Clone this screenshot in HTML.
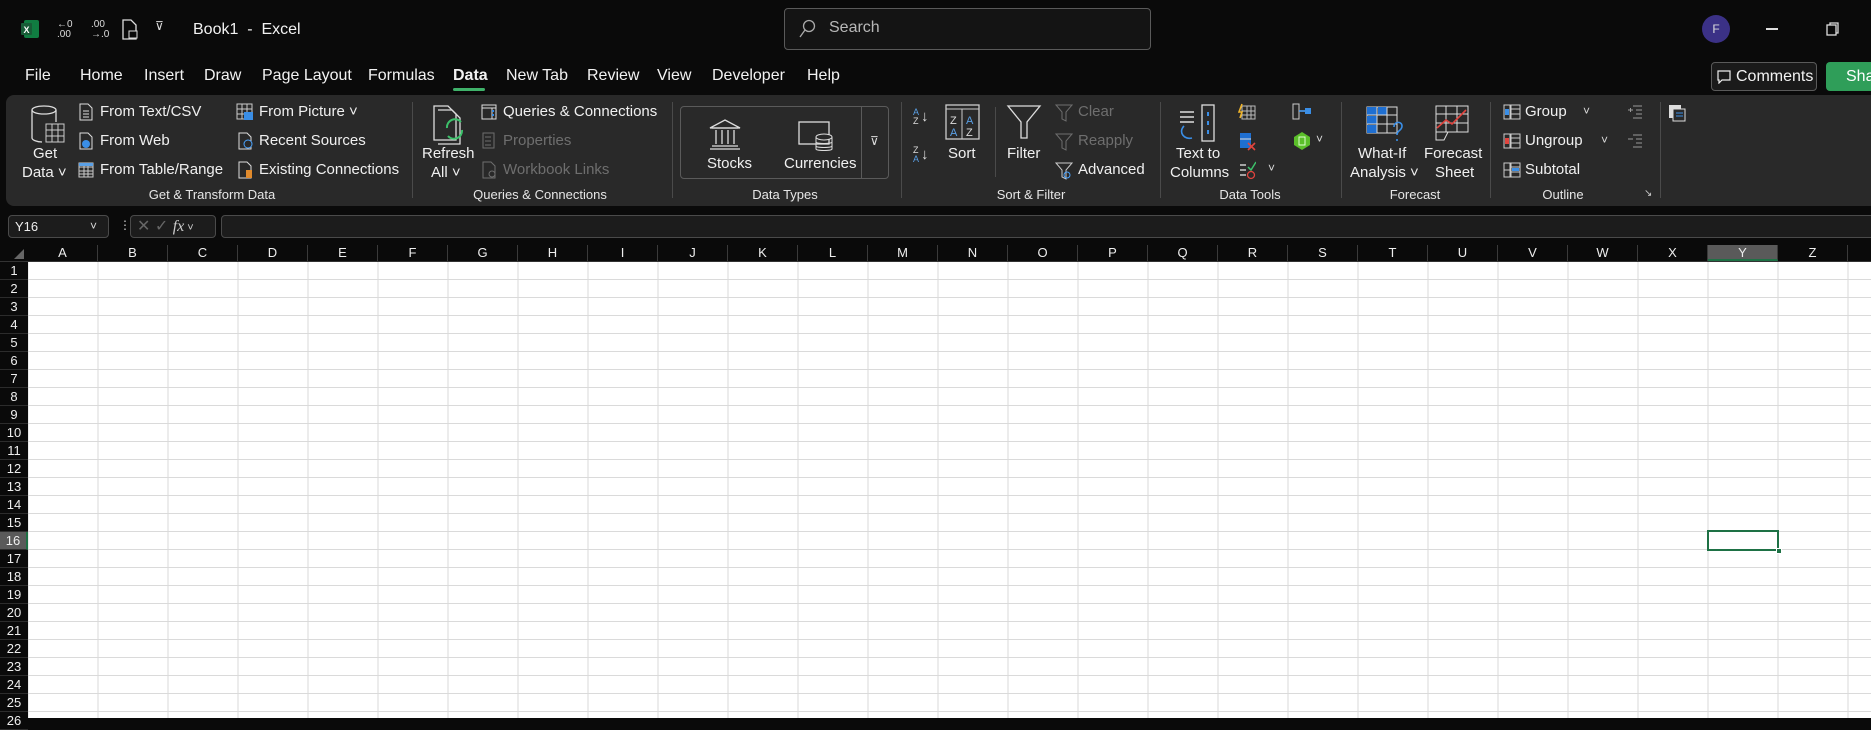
<!DOCTYPE html>
<html><head><meta charset="utf-8"><style>
*{margin:0;padding:0;box-sizing:border-box}
body{width:1871px;height:718px;background:#0a0a0a;font-family:"Liberation Sans",sans-serif;color:#fff;position:relative;overflow:hidden}
.a{position:absolute;white-space:nowrap}
.t{font-size:15px;color:#f0f0f0}
.dis{color:#6e6e6e}
.gl{font-size:13px;color:#e6e6e6;transform:translateX(-50%)}
.sep{position:absolute;top:102px;width:1px;height:96px;background:#4a4a4a}
.tab{font-size:16px;color:#f2f2f2;top:67px}
.ch{position:absolute;top:245px;height:16px;width:70px;text-align:center;font-size:13px;color:#eee;border-right:1px solid #3a3a3a;line-height:16px}
.rh{position:absolute;left:0;width:28px;height:18px;font-size:13px;color:#eee;text-align:center;line-height:18px;border-bottom:1px solid #2c2c2c}
svg{position:absolute}
</style></head><body>
<!-- title bar -->
<svg style="left:20px;top:19px" width="20" height="20" viewBox="0 0 20 20"><rect x="4" y="1" width="15" height="18" rx="2" fill="#107c41"/><rect x="1" y="4" width="11" height="12" rx="1" fill="#185c37"/><text x="3.5" y="14" font-size="9" fill="#fff" font-family="Liberation Sans" font-weight="bold">X</text></svg>
<div class="a" style="left:57px;top:20px;font-size:10px;line-height:10px;color:#ddd">←0<br>.00</div>
<div class="a" style="left:91px;top:20px;font-size:10px;line-height:10px;color:#ddd">.00<br>→.0</div>
<svg style="left:121px;top:19px" width="18" height="22"><path d="M2 1h8l5 5v14H2z" fill="none" stroke="#ddd" stroke-width="1.3"/><rect x="8" y="12" width="8" height="7" fill="#0a0a0a" stroke="#ddd"/></svg>
<div class="a" style="left:155px;top:19px;font-size:12px;color:#ddd">⊽</div>
<div class="a" style="left:193px;top:21px;font-size:16px;color:#f2f2f2">Book1&nbsp; - &nbsp;Excel</div>
<div class="a" style="left:784px;top:8px;width:367px;height:42px;border:1px solid #5a5a5a;border-radius:4px;background:#141414"></div>
<svg style="left:798px;top:19px" width="18" height="20"><circle cx="11" cy="7" r="5.5" fill="none" stroke="#aaa" stroke-width="1.3"/><path d="M7 11L2 18" stroke="#aaa" stroke-width="1.3"/></svg>
<div class="a" style="left:829px;top:19px;font-size:16px;color:#b8b8b8">Search</div>
<div class="a" style="left:1702px;top:15px;width:28px;height:28px;border-radius:50%;background:#3b3186;font-size:12px;text-align:center;line-height:28px;color:#ddd">F</div>
<div class="a" style="left:1766px;top:28px;width:12px;height:1.5px;background:#ddd"></div>
<svg style="left:1826px;top:22px" width="14" height="14"><rect x="1" y="3" width="9" height="10" fill="none" stroke="#ddd" stroke-width="1.3"/><path d="M4 3V1h8v10h-2" fill="none" stroke="#ddd" stroke-width="1.3"/></svg>
<!-- tabs -->
<div class="a tab" style="left:25px">File</div>
<div class="a tab" style="left:80px">Home</div>
<div class="a tab" style="left:144px">Insert</div>
<div class="a tab" style="left:204px">Draw</div>
<div class="a tab" style="left:262px">Page Layout</div>
<div class="a tab" style="left:368px">Formulas</div>
<div class="a tab" style="left:453px;font-weight:bold">Data</div>
<div class="a" style="left:453px;top:88px;width:32px;height:3px;background:#3fb26a;border-radius:2px"></div>
<div class="a tab" style="left:506px">New Tab</div>
<div class="a tab" style="left:587px">Review</div>
<div class="a tab" style="left:657px">View</div>
<div class="a tab" style="left:712px">Developer</div>
<div class="a tab" style="left:807px">Help</div>
<div class="a" style="left:1711px;top:62px;width:106px;height:29px;border:1px solid #5a5a5a;border-radius:4px;background:#1a1a1a;font-size:16px;line-height:27px;padding-left:24px;color:#f2f2f2">Comments</div>
<svg style="left:1717px;top:70px" width="14" height="14"><path d="M1 1h12v9H5l-3 3v-3H1z" fill="none" stroke="#eee" stroke-width="1.2"/></svg>
<div class="a" style="left:1826px;top:62px;width:60px;height:29px;border-radius:4px;background:#2f9e59;font-size:16px;line-height:29px;padding-left:20px;color:#fff">Share</div>
<!-- ribbon -->
<div class="a" style="left:6px;top:95px;width:1880px;height:111px;background:#292929;border-radius:8px"></div>
<!-- get data -->
<svg style="left:29px;top:104px" width="40" height="46"><ellipse cx="15" cy="6" rx="12" ry="4" fill="none" stroke="#ddd" stroke-width="1.3"/><path d="M3 6v28c0 2 5 4 10 4M27 6v12" fill="none" stroke="#ddd" stroke-width="1.3"/><rect x="17" y="20" width="18" height="18" fill="#292929" stroke="#ccc"/><path d="M17 26h18M17 32h18M23 20v18M29 20v18" stroke="#ccc"/></svg>
<div class="a t" style="left:33px;top:145px">Get</div>
<div class="a t" style="left:22px;top:164px">Data ˅</div>
<div class="a t" style="left:100px;top:103px">From Text/CSV</div>
<div class="a t" style="left:100px;top:132px">From Web</div>
<div class="a t" style="left:100px;top:161px">From Table/Range</div>
<svg style="left:79px;top:103px" width="14" height="18"><path d="M1 1h8l4 4v12H1z" fill="none" stroke="#ddd"/><path d="M4 8h6M4 11h6M4 14h6" stroke="#ddd"/></svg>
<svg style="left:79px;top:132px" width="14" height="18"><path d="M1 1h8l4 4v12H1z" fill="none" stroke="#ddd"/><circle cx="7" cy="12" r="4" fill="#3a8ee6"/></svg>
<svg style="left:78px;top:162px" width="16" height="16"><rect x="1" y="1" width="14" height="14" fill="none" stroke="#ccc"/><path d="M1 5h14M1 9h14M1 12h14M6 1v14M10 1v14" stroke="#ccc"/><rect x="1" y="1" width="14" height="3" fill="#5aa0e6"/></svg>
<div class="a t" style="left:259px;top:103px">From Picture ˅</div>
<div class="a t" style="left:259px;top:132px">Recent Sources</div>
<div class="a t" style="left:259px;top:161px">Existing Connections</div>
<svg style="left:236px;top:103px" width="18" height="18"><rect x="1" y="1" width="15" height="15" fill="none" stroke="#ccc"/><path d="M1 6h15M1 11h15M6 1v15M11 1v15" stroke="#ccc"/><rect x="8" y="9" width="9" height="8" fill="#3a8ee6"/></svg>
<svg style="left:238px;top:132px" width="16" height="18"><path d="M1 1h8l4 4v12H1z" fill="none" stroke="#ddd"/><circle cx="10" cy="12" r="4" fill="#292929" stroke="#4aa3ff"/></svg>
<svg style="left:238px;top:161px" width="16" height="18"><path d="M1 1h8l4 4v12H1z" fill="none" stroke="#ddd"/><rect x="8" y="9" width="6" height="8" fill="#e08a2c"/></svg>
<div class="a gl" style="left:212px;top:187px">Get &amp; Transform Data</div>
<div class="sep" style="left:412px"></div>
<!-- queries -->
<svg style="left:432px;top:104px" width="36" height="44"><path d="M2 2h14l8 8v26H2z" fill="none" stroke="#ddd" stroke-width="1.3"/><path d="M6 6h14l8 8v26H6" fill="none" stroke="#ddd" stroke-width="1.3"/><path d="M30 26a8 8 0 0 1-14 6M15 24a8 8 0 0 1 14-6" fill="none" stroke="#3cc06a" stroke-width="2"/></svg>
<div class="a t" style="left:422px;top:145px">Refresh</div>
<div class="a t" style="left:431px;top:164px">All ˅</div>
<svg style="left:481px;top:104px" width="16" height="16"><rect x="1" y="1" width="14" height="14" fill="none" stroke="#ddd"/><path d="M1 4h14M11 4v11" stroke="#ddd"/><path d="M12 6v2M12 10v2" stroke="#3a8ee6" stroke-width="2"/></svg>
<div class="a t" style="left:503px;top:103px">Queries &amp; Connections</div>
<svg style="left:482px;top:132px" width="14" height="18"><rect x="1" y="1" width="11" height="15" fill="none" stroke="#6e6e6e"/><path d="M3 5h6M3 9h6M3 13h6" stroke="#6e6e6e"/></svg>
<div class="a t dis" style="left:503px;top:132px">Properties</div>
<svg style="left:482px;top:161px" width="16" height="18"><path d="M1 1h8l4 4v12H1z" fill="none" stroke="#6e6e6e"/><circle cx="10" cy="13" r="3" fill="none" stroke="#6e6e6e"/></svg>
<div class="a t dis" style="left:503px;top:161px">Workbook Links</div>
<div class="a gl" style="left:540px;top:187px">Queries &amp; Connections</div>
<div class="sep" style="left:672px"></div>
<!-- data types -->
<div class="a" style="left:680px;top:106px;width:209px;height:73px;border:1px solid #5a5a5a;border-radius:4px"></div>
<div class="a" style="left:861px;top:106px;width:1px;height:73px;background:#5a5a5a"></div>
<div class="a" style="left:870px;top:134px;font-size:12px;color:#ddd">⊽</div>
<svg style="left:708px;top:118px" width="34" height="32"><path d="M2 10L17 2l15 8z" fill="none" stroke="#ddd" stroke-width="1.3"/><path d="M4 10h26M4 28h26M2 31h30M8 12v14M14 12v14M20 12v14M26 12v14" stroke="#ddd" stroke-width="1.3"/></svg>
<div class="a t" style="left:707px;top:155px">Stocks</div>
<svg style="left:798px;top:120px" width="40" height="34"><rect x="1" y="2" width="30" height="22" fill="none" stroke="#ddd" stroke-width="1.3"/><ellipse cx="26" cy="17" rx="8" ry="3" fill="#292929" stroke="#ddd"/><path d="M18 17v12c0 2 16 2 16 0V17M18 22c0 2 16 2 16 0M18 26c0 2 16 2 16 0" fill="none" stroke="#ddd"/></svg>
<div class="a t" style="left:784px;top:155px">Currencies</div>
<div class="a gl" style="left:785px;top:187px">Data Types</div>
<div class="sep" style="left:901px"></div>
<!-- sort & filter -->
<div class="a" style="left:913px;top:108px;font-size:9px;line-height:9px;color:#5aa0e6">A<br><span style="color:#ddd">Z</span></div>
<div class="a" style="left:921px;top:108px;font-size:15px;color:#ddd">↓</div>
<div class="a" style="left:913px;top:146px;font-size:9px;line-height:9px;color:#ddd">Z<br><span style="color:#5aa0e6">A</span></div>
<div class="a" style="left:921px;top:146px;font-size:15px;color:#ddd">↓</div>
<svg style="left:945px;top:104px" width="36" height="38"><rect x="1" y="1" width="33" height="34" fill="none" stroke="#ccc" stroke-width="1.3"/><path d="M1 5h33M17 5v30" stroke="#ccc"/><text x="5" y="20" font-size="11" fill="#ddd" font-family="Liberation Sans">Z</text><text x="5" y="32" font-size="11" fill="#5aa0e6" font-family="Liberation Sans">A</text><text x="21" y="20" font-size="11" fill="#5aa0e6" font-family="Liberation Sans">A</text><text x="21" y="32" font-size="11" fill="#ddd" font-family="Liberation Sans">Z</text></svg>
<div class="a t" style="left:948px;top:145px">Sort</div>
<div class="a" style="left:995px;top:107px;width:1px;height:70px;background:#4a4a4a"></div>
<svg style="left:1006px;top:104px" width="36" height="36"><path d="M2 2h32L21 18v16h-6V18z" fill="none" stroke="#ddd" stroke-width="1.3"/></svg>
<div class="a t" style="left:1007px;top:145px">Filter</div>
<svg style="left:1055px;top:103px" width="18" height="20"><path d="M1 2h16l-6 7v9l-4-2V9z" fill="none" stroke="#6e6e6e"/></svg>
<div class="a t dis" style="left:1078px;top:103px">Clear</div>
<svg style="left:1055px;top:132px" width="18" height="20"><path d="M1 2h16l-6 7v9l-4-2V9z" fill="none" stroke="#6e6e6e"/></svg>
<div class="a t dis" style="left:1078px;top:132px">Reapply</div>
<svg style="left:1055px;top:161px" width="18" height="20"><path d="M1 2h16l-6 7v9l-4-2V9z" fill="none" stroke="#ccc"/><circle cx="12" cy="14" r="3" fill="none" stroke="#4aa3ff"/></svg>
<div class="a t" style="left:1078px;top:161px">Advanced</div>
<div class="a gl" style="left:1031px;top:187px">Sort &amp; Filter</div>
<div class="sep" style="left:1160px"></div>
<!-- data tools -->
<svg style="left:1178px;top:104px" width="40" height="40"><path d="M2 8h14M2 13h14M2 18h14" stroke="#ddd" stroke-width="1.5"/><rect x="24" y="1" width="12" height="36" fill="none" stroke="#ddd" stroke-width="1.3"/><path d="M30 8v4M30 17v4M30 26v4" stroke="#3a8ee6" stroke-width="2"/><path d="M6 22c-6 6 0 14 8 12" fill="none" stroke="#3a8ee6" stroke-width="1.6"/></svg>
<div class="a t" style="left:1176px;top:145px">Text to</div>
<div class="a t" style="left:1170px;top:164px">Columns</div>
<svg style="left:1238px;top:103px" width="18" height="18"><rect x="4" y="3" width="13" height="13" fill="none" stroke="#bbb"/><path d="M4 8h13M4 12h13M9 3v13M13 3v13" stroke="#bbb"/><path d="M4 1L1 9h3l-2 6" fill="none" stroke="#f0b429" stroke-width="1.6"/></svg>
<svg style="left:1238px;top:132px" width="18" height="20"><rect x="2" y="1" width="11" height="15" fill="#1f6fd1"/><path d="M2 7h11" stroke="#ddd"/><path d="M10 11l7 7M17 11l-7 7" stroke="#e0443e" stroke-width="1.6"/></svg>
<svg style="left:1238px;top:161px" width="18" height="20"><path d="M2 4h6M2 9h6M2 14h6" stroke="#ccc" stroke-width="1.6"/><path d="M10 6l3 3 5-8" fill="none" stroke="#3cc06a" stroke-width="1.5"/><circle cx="13" cy="14" r="3.5" fill="none" stroke="#e0443e" stroke-width="1.3"/></svg>
<div class="a" style="left:1268px;top:161px;font-size:12px;color:#ddd">˅</div>
<svg style="left:1292px;top:103px" width="20" height="18"><rect x="1" y="1" width="6" height="15" fill="none" stroke="#ccc"/><path d="M7 8h6" stroke="#4aa3ff" stroke-width="1.5"/><rect x="13" y="5" width="6" height="6" fill="#3a8ee6"/></svg>
<svg style="left:1292px;top:131px" width="20" height="20"><path d="M10 1l8 5v8l-8 5-8-5V6z" fill="#5bbf2a"/><rect x="7" y="6" width="6" height="8" fill="none" stroke="#dfffd0"/></svg>
<div class="a" style="left:1316px;top:132px;font-size:12px;color:#ddd">˅</div>
<div class="a gl" style="left:1250px;top:187px">Data Tools</div>
<div class="sep" style="left:1341px"></div>
<!-- forecast -->
<svg style="left:1366px;top:106px" width="40" height="38"><rect x="1" y="1" width="30" height="26" fill="none" stroke="#ddd"/><rect x="1" y="1" width="10" height="8" fill="#1f6fd1"/><rect x="1" y="10" width="10" height="8" fill="#1f6fd1"/><rect x="1" y="19" width="10" height="8" fill="#1f6fd1"/><rect x="12" y="1" width="9" height="8" fill="#1f6fd1"/><path d="M1 9h30M1 18h30M11 1v26M21 1v26" stroke="#ddd"/><path d="M28 21c0-6 8-6 8-1s-5 4-5 9M31 33v2" fill="none" stroke="#3a8ee6" stroke-width="1.6"/></svg>
<div class="a t" style="left:1358px;top:145px">What-If</div>
<div class="a t" style="left:1350px;top:164px">Analysis ˅</div>
<svg style="left:1434px;top:104px" width="38" height="40"><rect x="2" y="2" width="32" height="26" fill="none" stroke="#ddd"/><path d="M2 10h32M2 19h32M12 2v26M23 2v26" stroke="#ddd"/><path d="M3 24l9-8 6 4 14-14" fill="none" stroke="#e0443e" stroke-width="1.6"/><path d="M2 28v8h8l4-8" fill="none" stroke="#ddd"/></svg>
<div class="a t" style="left:1424px;top:145px">Forecast</div>
<div class="a t" style="left:1435px;top:164px">Sheet</div>
<div class="a gl" style="left:1415px;top:187px">Forecast</div>
<div class="sep" style="left:1490px"></div>
<!-- outline -->
<svg style="left:1503px;top:104px" width="18" height="16"><rect x="1" y="1" width="6" height="14" fill="none" stroke="#ccc"/><rect x="8" y="1" width="9" height="14" fill="none" stroke="#ccc"/><path d="M8 5h9M8 10h9" stroke="#ccc"/><rect x="2" y="5" width="4" height="6" fill="#3a8ee6"/></svg>
<div class="a t" style="left:1525px;top:103px">Group</div>
<div class="a" style="left:1583px;top:104px;font-size:12px;color:#ddd">˅</div>
<svg style="left:1503px;top:133px" width="18" height="16"><rect x="1" y="1" width="6" height="14" fill="none" stroke="#ccc"/><rect x="8" y="1" width="9" height="14" fill="none" stroke="#ccc"/><path d="M8 5h9M8 10h9" stroke="#ccc"/><rect x="2" y="5" width="4" height="6" fill="#e0443e"/></svg>
<div class="a t" style="left:1525px;top:132px">Ungroup</div>
<div class="a" style="left:1601px;top:133px;font-size:12px;color:#ddd">˅</div>
<svg style="left:1503px;top:162px" width="18" height="16"><rect x="1" y="1" width="6" height="14" fill="none" stroke="#ccc"/><rect x="8" y="1" width="9" height="14" fill="none" stroke="#ccc"/><path d="M8 5h9M8 10h9M1 8h6" stroke="#ccc"/><rect x="9" y="6" width="7" height="3" fill="#3a8ee6"/></svg>
<div class="a t" style="left:1525px;top:161px">Subtotal</div>
<svg style="left:1627px;top:104px" width="16" height="16"><path d="M6 2h9M9 6h6M9 10h6M6 14h9M1 6h5M3.5 4v4" stroke="#999"/></svg>
<svg style="left:1627px;top:133px" width="16" height="16"><path d="M6 2h9M9 6h6M9 10h6M6 14h9M1 6h5" stroke="#999"/></svg>
<div class="a gl" style="left:1563px;top:187px">Outline</div>
<div class="a" style="left:1644px;top:188px;font-size:10px;color:#ccc">↘</div>
<div class="sep" style="left:1660px"></div>
<svg style="left:1668px;top:104px" width="18" height="18"><rect x="1" y="1" width="12" height="13" fill="#ddd"/><rect x="5" y="5" width="12" height="12" fill="#292929" stroke="#ddd"/><path d="M8 9h7M8 12h7" stroke="#3a8ee6"/></svg>
<!-- formula bar -->
<div class="a" style="left:8px;top:215px;width:101px;height:23px;border:1px solid #4a4a4a;border-radius:4px;background:#1c1c1c;font-size:13px;line-height:21px;padding-left:6px;color:#eee">Y16</div>
<div class="a" style="left:90px;top:215px;font-size:12px;color:#ddd;line-height:23px">˅</div>
<div class="a" style="left:119px;top:218px;font-size:12px;color:#ccc">⋮</div>
<div class="a" style="left:130px;top:215px;width:86px;height:23px;border:1px solid #4a4a4a;border-radius:4px;background:#1c1c1c;font-size:16px;line-height:21px;color:#666;padding-left:6px">✕ ✓ <i style="color:#ccc;font-family:'Liberation Serif'">fx</i><span style="font-size:11px;color:#ccc"> ˅</span></div>
<div class="a" style="left:221px;top:215px;width:1660px;height:23px;border:1px solid #4a4a4a;border-radius:4px;background:#1c1c1c"></div>
<!-- grid -->
<div class="a" style="left:28px;top:262px;width:1843px;height:456px;background-color:#fff;background-image:linear-gradient(to right,transparent 69px,#dadada 69px,#dadada 71px),linear-gradient(to bottom,transparent 17px,#dadada 17px,#dadada 18px);background-size:70px 18px,70px 18px;background-position:0.5px 0,0 0"></div>
<div class="a" style="left:0;top:245px;width:28px;height:16px;background:#0a0a0a"></div>
<svg style="left:13px;top:248px" width="12" height="12"><path d="M11 1v10H1z" fill="#666"/></svg>
<div class="a" style="left:0;top:261px;width:1871px;height:1px;background:#333"></div>
<div class="ch" style="left:28px">A</div><div class="ch" style="left:98px">B</div><div class="ch" style="left:168px">C</div><div class="ch" style="left:238px">D</div><div class="ch" style="left:308px">E</div><div class="ch" style="left:378px">F</div><div class="ch" style="left:448px">G</div><div class="ch" style="left:518px">H</div><div class="ch" style="left:588px">I</div><div class="ch" style="left:658px">J</div><div class="ch" style="left:728px">K</div><div class="ch" style="left:798px">L</div><div class="ch" style="left:868px">M</div><div class="ch" style="left:938px">N</div><div class="ch" style="left:1008px">O</div><div class="ch" style="left:1078px">P</div><div class="ch" style="left:1148px">Q</div><div class="ch" style="left:1218px">R</div><div class="ch" style="left:1288px">S</div><div class="ch" style="left:1358px">T</div><div class="ch" style="left:1428px">U</div><div class="ch" style="left:1498px">V</div><div class="ch" style="left:1568px">W</div><div class="ch" style="left:1638px">X</div><div class="ch" style="left:1708px;background:#5a5a5a;border-bottom:2px solid #1e7145">Y</div><div class="ch" style="left:1778px">Z</div>
<div class="rh" style="top:262px">1</div><div class="rh" style="top:280px">2</div><div class="rh" style="top:298px">3</div><div class="rh" style="top:316px">4</div><div class="rh" style="top:334px">5</div><div class="rh" style="top:352px">6</div><div class="rh" style="top:370px">7</div><div class="rh" style="top:388px">8</div><div class="rh" style="top:406px">9</div><div class="rh" style="top:424px">10</div><div class="rh" style="top:442px">11</div><div class="rh" style="top:460px">12</div><div class="rh" style="top:478px">13</div><div class="rh" style="top:496px">14</div><div class="rh" style="top:514px">15</div><div class="rh" style="top:532px;background:#5a5a5a;border-right:2px solid #1e7145">16</div><div class="rh" style="top:550px">17</div><div class="rh" style="top:568px">18</div><div class="rh" style="top:586px">19</div><div class="rh" style="top:604px">20</div><div class="rh" style="top:622px">21</div><div class="rh" style="top:640px">22</div><div class="rh" style="top:658px">23</div><div class="rh" style="top:676px">24</div><div class="rh" style="top:694px">25</div><div class="rh" style="top:712px">26</div>
<div class="a" style="left:1707px;top:530px;width:72px;height:21px;border:2px solid #1e7145"></div>
<div class="a" style="left:1776px;top:548px;width:6px;height:6px;background:#1e7145;border:1px solid #fff"></div>
</body></html>
